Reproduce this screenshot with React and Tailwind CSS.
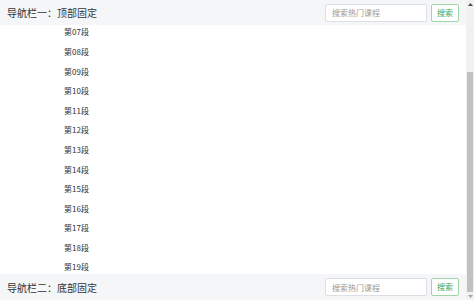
import { useEffect, useRef } from 'react';

const sections = Array.from({ length: 19 }, (_, i) => `第${String(i + 1).padStart(2, '0')}段`);

const NavBar = ({ title, position }) => (
  <div className={`absolute left-0 right-2 ${position} flex items-center justify-between bg-[#f5f6f8] pl-[7px] pr-[7px]`}>
    <span className="text-[10px] text-[#333]">{title}</span>
    <div className="flex items-center gap-1">
      <input
        type="text"
        placeholder="搜索热门课程"
        className="h-[18px] w-[102px] rounded-[2px] border border-[#dcdfe6] bg-white px-[6px] text-[8px] text-[#333] outline-none placeholder:text-[#999]"
      />
      <button className="h-[18px] w-[28px] rounded-[2px] border border-[#9fd6a8] bg-white text-[8px] text-[#3aa55a]">
        搜索
      </button>
    </div>
  </div>
);

// drawn scrollbar, the headless capture hides the native one
const ScrollBar = () => (
  <div className="absolute right-0 top-0 bottom-0 flex w-2 flex-col bg-[#f1f1f1]">
    <div className="flex h-2 items-center justify-center">
      <svg width="5" height="3" viewBox="0 0 5 3"><path d="M2.5 0L5 3H0z" fill="#505050" /></svg>
    </div>
    <div className="relative flex-1">
      <div className="absolute left-[1px] right-[1px] top-[64px] h-[220px] bg-[#c1c1c1]" />
    </div>
    <div className="flex h-2 items-center justify-center">
      <svg width="5" height="3" viewBox="0 0 5 3"><path d="M0 0H5L2.5 3z" fill="#a3a3a3" /></svg>
    </div>
  </div>
);

const App = () => {
  const scrollRef = useRef(null);

  useEffect(() => {
    const el = scrollRef.current;
    if (el) el.scrollTop = el.scrollHeight;
  }, []);

  return (
    <div className="relative h-[300px] w-full bg-white font-['Noto_Sans_CJK_SC',sans-serif]">
      <div
        ref={scrollRef}
        className="mr-2 h-full overflow-y-scroll [scrollbar-width:none] [&::-webkit-scrollbar]:hidden"
      >
        <ul className="pb-[23px]">
          {sections.map((s) => (
            <li key={s} className="flex h-[19.6px] items-center pl-16 text-[8px] text-[#333]">
              {s}
            </li>
          ))}
        </ul>
      </div>
      <NavBar title="导航栏一：顶部固定" position="top-0 h-[25px]" />
      <NavBar title="导航栏二：底部固定" position="bottom-0 h-[26px]" />
      <ScrollBar />
    </div>
  );
};

export default App;
